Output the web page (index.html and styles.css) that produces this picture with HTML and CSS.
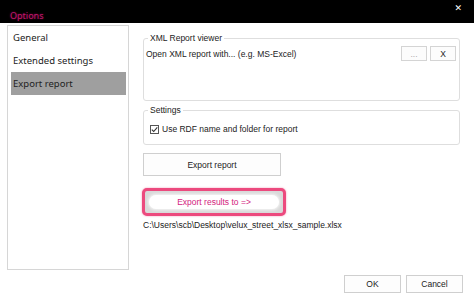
FILE: index.html
```html
<!DOCTYPE html>
<html lang="en">
<head>
    <meta charset="UTF-8">
    <meta name="viewport" content="width=device-width, initial-scale=1.0">
    <title>Options</title>
    <link rel="stylesheet" href="styles.css">
</head>
<body>
    <div class="titlebar">
        <span class="title">Options</span>
        <span class="close">&#10005;</span>
    </div>

    <div class="content">
        <div class="nav">
            <div class="nav-item">General</div>
            <div class="nav-item">Extended settings</div>
            <div class="nav-item active">Export report</div>
        </div>

        <div class="panel">
            <fieldset class="group group-viewer">
                <legend>XML Report viewer</legend>
                <div class="viewer-row">
                    <span>Open XML report with... (e.g. MS-Excel)</span>
                    <span class="small-buttons">
                        <button class="small-button dots">...</button>
                        <button class="small-button">X</button>
                    </span>
                </div>
            </fieldset>

            <fieldset class="group group-settings">
                <legend>Settings</legend>
                <label class="check-row">
                    <span class="checkbox">
                        <svg width="9" height="9" viewBox="0 0 9 9"><path d="M1.8 4.6 L3.7 6.5 L7.3 2.3" fill="none" stroke="#333" stroke-width="1.1"/></svg>
                    </span>
                    Use RDF name and folder for report
                </label>
            </fieldset>

            <button class="win-button export-button">Export report</button>

            <button class="export-results"><span>Export results to =&gt;</span></button>

            <div class="path">C:\Users\scb\Desktop\velux_street_xlsx_sample.xlsx</div>
        </div>
    </div>

    <div class="footer">
        <button class="win-button footer-button">OK</button>
        <button class="win-button footer-button">Cancel</button>
    </div>
</body>
</html>
```

FILE: styles.css
```css
body {
    margin: 0;
    width: 474px;
    height: 303px;
    background-color: #fff;
    font-family: "Liberation Sans", Arial, sans-serif;
    font-size: 8.5px;
    color: #222;
    display: flex;
    flex-direction: column;
    overflow: hidden;
}
.titlebar {
    height: 23px;
    background-color: #000;
    display: flex;
    justify-content: space-between;
    padding: 0 12px 0 10px;
    box-sizing: border-box;
}
.title {
    font-family: "Noto Sans", sans-serif;
    font-size: 9px;
    color: #c0156c;
    text-shadow: 0 0 2px rgba(200, 20, 110, 0.6);
    padding-top: 9px;
}
.close {
    color: #fff;
    font-family: "DejaVu Sans", sans-serif;
    font-size: 9px;
    font-weight: bold;
    padding-top: 3px;
}
.content {
    display: flex;
    padding: 2px 0 0 7px;
}
.nav {
    width: 122px;
    height: 245px;
    border: 1px solid #d6d6d6;
    box-sizing: border-box;
    padding: 0 2px 0 3px;
    font-family: "Noto Sans", sans-serif;
    font-size: 9.5px;
    color: #222;
}
.nav-item {
    height: 23px;
    line-height: 23px;
    padding-left: 2px;
}
.nav-item.active {
    background-color: #9f9f9f;
}
.panel {
    margin-left: 14px;
    width: 317px;
    display: flex;
    flex-direction: column;
    align-items: flex-start;
}
.group {
    width: 317px;
    box-sizing: border-box;
    margin: 0;
    border: 1px solid #dedede;
    border-radius: 3px;
    padding: 0 3px 0 2px;
}
.group legend {
    padding: 0 2px;
    margin-left: 2px;
    line-height: 11px;
}
.group-viewer {
    margin-top: 8px;
    height: 68px;
}
.viewer-row {
    display: flex;
    justify-content: space-between;
    align-items: center;
    margin-top: 2px;
}
.small-buttons {
    display: flex;
    gap: 3px;
}
.small-button {
    width: 26px;
    height: 15px;
    padding: 0;
    border: 1px solid #d4d4d4;
    background-color: #fcfcfc;
    font-family: "Liberation Sans", Arial, sans-serif;
    font-size: 8.5px;
    color: #222;
}
.small-button.dots {
    color: #aaa;
}
.group-settings {
    margin-top: 4px;
    height: 40px;
}
.check-row {
    display: flex;
    align-items: center;
    gap: 3px;
    margin: 8px 0 0 4px;
}
.checkbox {
    width: 9px;
    height: 9px;
    border: 1px solid #555;
    box-sizing: border-box;
    display: flex;
    align-items: center;
    justify-content: center;
}
.checkbox svg {
    flex: none;
}
.win-button {
    border: 1px solid #cfcfcf;
    background-color: #fdfdfd;
    font-family: "Liberation Sans", Arial, sans-serif;
    font-size: 8.5px;
    color: #222;
    padding: 0;
}
.export-button {
    width: 138px;
    height: 23px;
    margin-top: 8px;
}
.export-results {
    width: 144px;
    height: 28px;
    margin: 12px 0 0 -1px;
    border: 3px solid #ec4a7e;
    border-radius: 5px;
    background-color: #d9d9d9;
    box-shadow: 0 0 2px rgba(236, 74, 126, 0.6);
    padding: 4px 4px;
    box-sizing: border-box;
    font-family: "Liberation Sans", Arial, sans-serif;
}
.export-results span {
    display: block;
    height: 14px;
    line-height: 14px;
    background-color: #fff;
    border-radius: 7px;
    box-shadow: 0 0 3px 1px #f6f6f6;
    color: #d3227e;
    font-size: 8.5px;
}
.path {
    margin-top: 4px;
}
.footer {
    display: flex;
    justify-content: flex-end;
    gap: 5px;
    padding: 5px 11px 0 0;
}
.footer-button {
    width: 57px;
    height: 18px;
}
```
